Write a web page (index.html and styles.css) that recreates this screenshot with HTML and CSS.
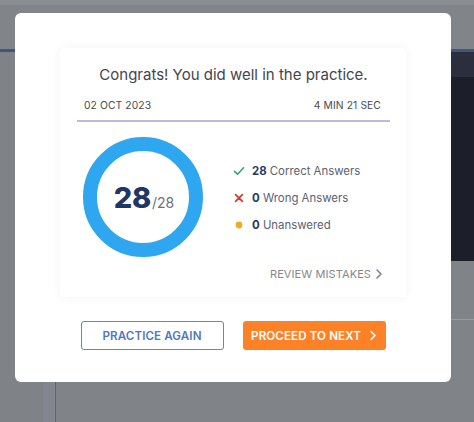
FILE: index.html
```html
<!DOCTYPE html>
<html>
<head>
<meta charset="utf-8">
<link rel="stylesheet" href="styles.css">
</head>
<body>
<div class="page">
  <div class="topstrip"></div>
  <div class="band"></div>
  <div class="blueline"></div>
  <div class="main">
    <div class="leftcol"></div>
    <div class="midcol"></div>
    <div class="rightcol">
      <div class="rhead"></div>
      <div class="rdark"></div>
      <div class="rgrey"></div>
    </div>
  </div>
</div>

<div class="modal">
  <div class="card">
    <h1 class="title">Congrats! You did well in the practice.</h1>
    <div class="meta">
      <span>02 OCT 2023</span>
      <span>4 MIN 21 SEC</span>
    </div>
    <div class="body">
      <div class="donut">
        <div class="score"><span class="big">28</span><span class="small">/28</span></div>
      </div>
      <ul class="legend">
        <li>
          <svg class="ic" width="12" height="12" viewBox="0 0 12 12"><path d="M1.5 6.3 L4.6 9.2 L10.6 2.8" fill="none" stroke="#2fa874" stroke-width="1.6" stroke-linecap="round" stroke-linejoin="round"/></svg>
          <span><b>28</b> Correct Answers</span>
        </li>
        <li>
          <svg class="ic" width="12" height="12" viewBox="0 0 12 12"><path d="M2.6 2.6 L9.4 9.4 M9.4 2.6 L2.6 9.4" fill="none" stroke="#d63a2c" stroke-width="1.7" stroke-linecap="round"/></svg>
          <span><b>0</b> Wrong Answers</span>
        </li>
        <li>
          <svg class="ic" width="12" height="12" viewBox="0 0 12 12"><circle cx="6" cy="6" r="3.4" fill="#e7b022"/></svg>
          <span><b>0</b> Unanswered</span>
        </li>
      </ul>
    </div>
    <div class="review">
      <span>REVIEW MISTAKES</span>
      <svg width="8" height="10" viewBox="0 0 8 10"><path d="M2 1 L6 5 L2 9" fill="none" stroke="#7d7d84" stroke-width="1.5" stroke-linecap="round" stroke-linejoin="round"/></svg>
    </div>
  </div>
  <div class="actions">
    <button class="btn outline">PRACTICE AGAIN</button>
    <button class="btn solid">PROCEED TO NEXT
      <svg width="8" height="11" viewBox="0 0 8 11"><path d="M2 1.5 L6 5.5 L2 9.5" fill="none" stroke="#fff" stroke-width="1.6" stroke-linecap="round" stroke-linejoin="round"/></svg>
    </button>
  </div>
</div>
</body>
</html>
```

FILE: styles.css
```css
* { box-sizing: border-box; }
html, body { margin: 0; padding: 0; }
body {
  width: 474px;
  height: 422px;
  overflow: hidden;
  background: #808388;
  font-family: Inter, "Noto Sans", sans-serif;
  position: relative;
}
.page { display: flex; flex-direction: column; height: 422px; }
.topstrip { height: 5px; background: #8a8d92; }
.band { height: 44px; background: #818489; }
.blueline { height: 3px; background: #3e5879; }
.main { flex: 1; display: flex; }
.leftcol { flex: 0 0 43px; background: #7f8287; }
.midcol { flex: 0 0 13px; background: #838691; border-right: 1px solid #5d6479; }
.rightcol { flex: 1; display: flex; flex-direction: column; align-items: flex-end; }
.rhead { width: 80px; height: 25px; background: #2b2f3d; }
.rdark { width: 80px; height: 184px; background: #1c1f2a; }
.rgrey { width: 80px; height: 59px; background: #808388; border-bottom: 1px solid #9a9ca1; }

.modal {
  position: absolute;
  left: 15px;
  top: 13px;
  width: 436px;
  height: 369px;
  background: #fff;
  border-radius: 6px;
  padding: 35px 45px 0 45px;
  display: flex;
  flex-direction: column;
}
.card {
  width: 346px;
  height: 249px;
  background: #fff;
  border-radius: 4px;
  box-shadow: 0 0 10px rgba(40, 50, 90, 0.06);
  padding: 17px 16px 0 17px;
  display: flex;
  flex-direction: column;
}
.title {
  margin: 0;
  font-size: 15px;
  line-height: 20px;
  font-weight: 400;
  color: #44454b;
  text-align: center;
}
.meta {
  margin-top: 13px;
  display: flex;
  justify-content: space-between;
  padding: 0 9px 8px 7px;
  border-bottom: 2px solid #b9bbe6;
  font-size: 10.3px;
  line-height: 14px;
  font-weight: 400;
  color: #4a4b50;
  letter-spacing: 0.1px;
}
.body {
  margin-top: 15px;
  display: flex;
  align-items: center;
  padding-left: 6px;
}
.donut {
  width: 120px;
  height: 120px;
  border-radius: 50%;
  border: 14px solid #2ea7f0;
  display: flex;
  align-items: center;
  justify-content: center;
  flex: 0 0 120px;
}
.score { display: flex; align-items: baseline; padding-left: 2px; }
.big { font-size: 29px; font-weight: 800; color: #1e3767; letter-spacing: -0.3px; }
.small { font-size: 14px; color: #6a6f7c; margin-left: 1px; }
.legend {
  list-style: none;
  margin: 0 0 0 30px;
  padding: 2px 0 0 0;
  display: flex;
  flex-direction: column;
}
.legend li {
  height: 27px;
  display: flex;
  align-items: center;
  font-size: 11.4px;
  color: #5b6173;
}
.legend li .ic { margin-right: 7px; }
.legend b { color: #253a63; font-weight: 700; }
.review {
  margin-top: 10px;
  align-self: flex-end;
  margin-right: 7px;
  display: flex;
  align-items: center;
  gap: 4px;
  font-size: 11px;
  line-height: 14px;
  color: #86878d;
  letter-spacing: 0.1px;
}
.actions {
  margin-top: 24px;
  display: flex;
  justify-content: center;
  gap: 19px;
}
.btn {
  width: 143px;
  height: 29px;
  border-radius: 3px;
  font-family: Inter, "Noto Sans", sans-serif;
  font-size: 11.6px;
  font-weight: 600;
  letter-spacing: 0.1px;
  display: flex;
  align-items: center;
  justify-content: center;
  gap: 8px;
  padding: 0;
  cursor: pointer;
}
.outline {
  background: #fff;
  border: 1.5px solid #5b88d2;
  color: #4f78c2;
}
.solid {
  background: #fd8227;
  border: none;
  color: #fff;
}
```
